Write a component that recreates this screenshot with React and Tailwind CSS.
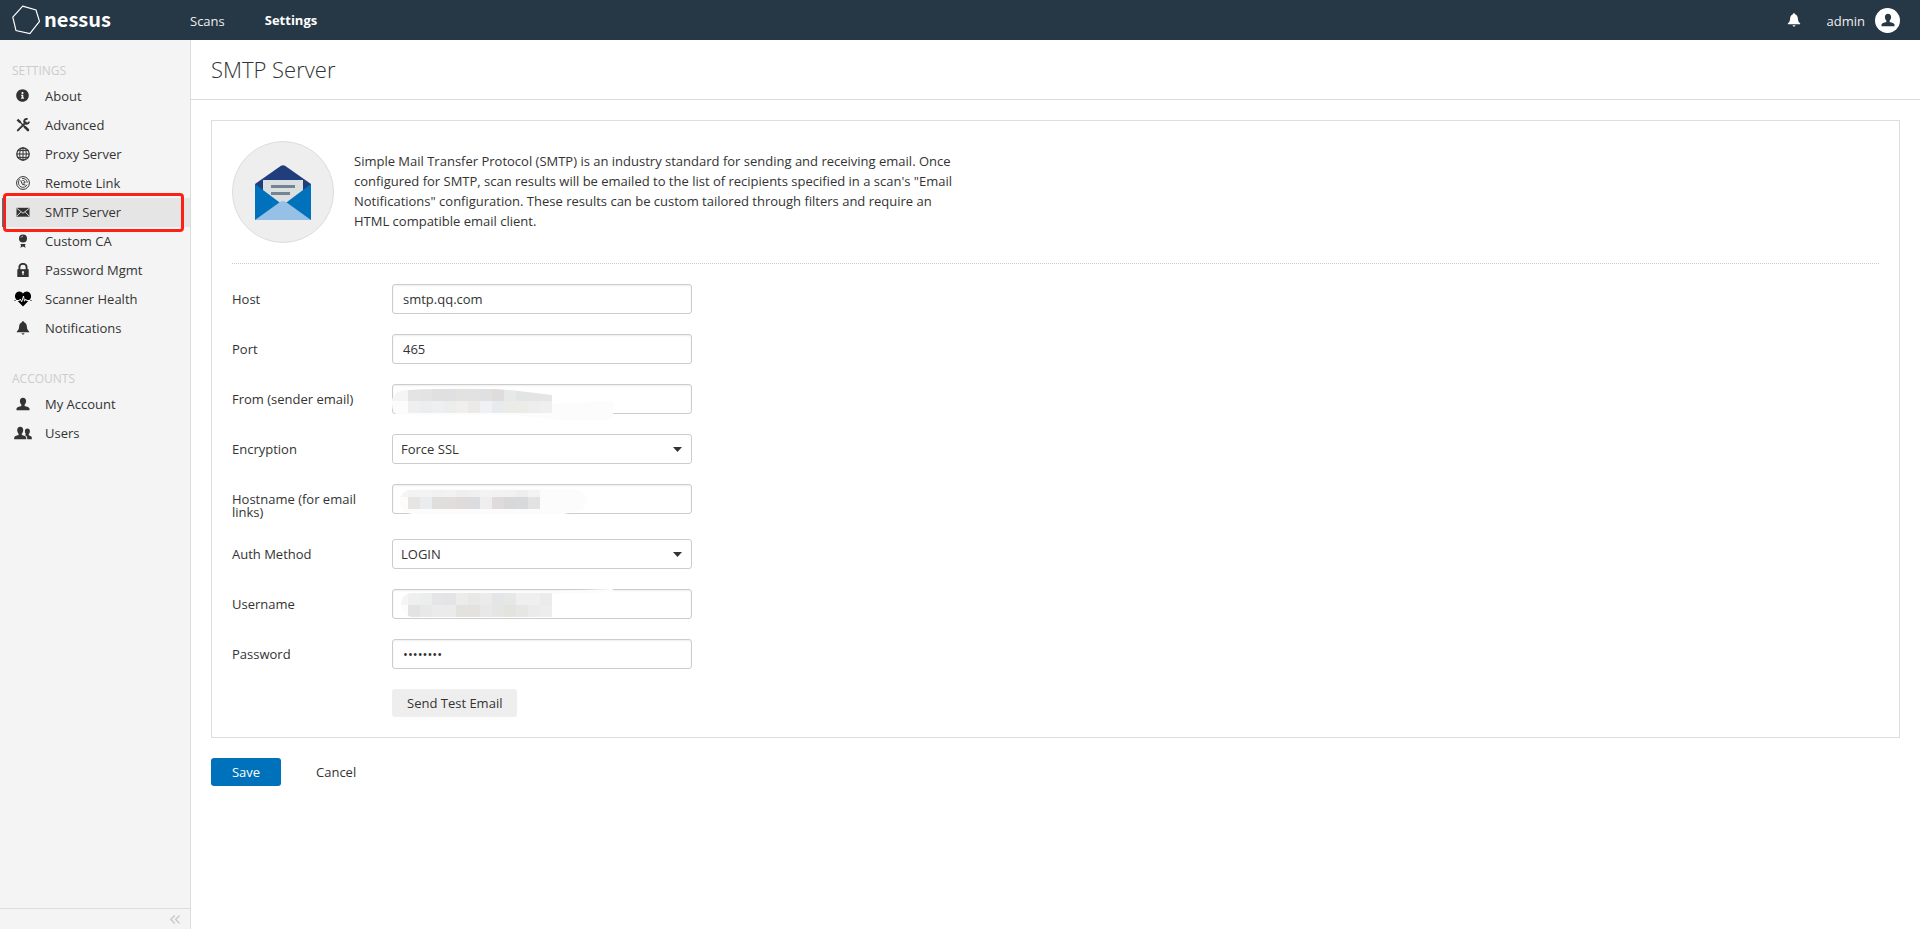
import { useState } from 'react';
import { FaInfoCircle } from 'react-icons/fa';

function ToolsIcon() {
  return (
    <svg viewBox="0 0 14 14" width="14" height="14" fill="none" stroke="currentColor">
      <path d="M1.4 1.6l3 2.8" strokeWidth="2.4" />
      <path d="M4 4l5 5" strokeWidth="1.2" />
      <path d="M8.8 8.8l3.2 3.2" strokeWidth="2.6" strokeLinecap="round" />
      <path d="M1.8 12.4l8-8" strokeWidth="2" strokeLinecap="round" />
      <path d="M11.6 1.2A2.4 2.4 0 1 0 13 3.6" strokeWidth="1.9" />
    </svg>
  );
}

function GlobeIcon() {
  return (
    <svg viewBox="0 0 14 14" width="14" height="14" fill="none" stroke="currentColor" strokeWidth="1">
      <circle cx="7" cy="7" r="6.2" strokeWidth="1.3" />
      <ellipse cx="7" cy="7" rx="3.3" ry="6.2" />
      <path d="M7 .8v12.4M.8 7h12.4M1.8 3.6h10.4M1.8 10.4h10.4" />
    </svg>
  );
}

function RemoteIcon() {
  return (
    <svg viewBox="0 0 14 14" width="14" height="14" fill="none" stroke="currentColor">
      <circle cx="7" cy="7" r="6.4" strokeWidth="1" />
      <path d="M4 2.8C1.800 5 2 9.600 5 10.900c2.400 1 5 .2 6-2.200M6 2.500c3-.4 5.300 1.500 5.200 4.300" strokeWidth=".9" />
      <path d="M4.800 4.400l1.600 4 3 .6M6.400 4.600c1.600-.4 2.800.6 2.600 2.300L7.200 7" strokeWidth="1" />
    </svg>
  );
}

function MailIcon() {
  return (
    <svg viewBox="0 0 14 14" width="14" height="14">
      <path fill="currentColor" d="M.5 2.8h13v8.9H.5z" />
      <path
        fill="none"
        stroke="#e5e5e5"
        strokeWidth=".9"
        d="M.6 3.2L7 8.2l6.4-5M.8 11.2l4.2-4.4M13.2 11.2L9 6.8"
      />
    </svg>
  );
}

function RibbonIcon() {
  return (
    <svg viewBox="0 0 14 14" width="14" height="14">
      <circle cx="7" cy="4.5" r="4" fill="currentColor" />
      <path d="M5 3.6c.4-.9 1.1-1.4 2-1.4" fill="none" stroke="#f4f4f4" strokeWidth=".7" />
      <path d="M4.4 10h5.2l-.7 1.400.8 2.400L7 12.4l-2.7 1.4.8-2.400z" fill="currentColor" />
    </svg>
  );
}

function LockIcon() {
  return (
    <svg viewBox="0 0 14 14" width="14" height="14">
      <path d="M3.4 7V3.9a3.6 3.1 0 0 1 7.2 0V7" fill="none" stroke="currentColor" strokeWidth="1.9" />
      <path d="M1.3 6.2h11.4V14H1.3z" fill="currentColor" />
      <path d="M7 8a1.2 1.2 0 0 0-.6 2.2V12h1.2v-1.8A1.2 1.2 0 0 0 7 8z" fill="#f4f4f4" />
    </svg>
  );
}

function HeartIcon() {
  return (
    <svg viewBox="0 0 18 16" width="18" height="16">
      <path
        fill="#000"
        d="M9 15.6L2.2 8.6C.4 6.500.6 3 2.600 1.400 4.700-.2 7.500.3 9 2.600 10.500.3 13.300-.2 15.400 1.400c2 1.600 2.200 5.100.4 7.200z"
      />
      <path fill="none" stroke="#f4f4f4" strokeWidth="1" d="M1.500 9.500h3.800l1-1.500 1.400 2.800L9.500 5l1 5.200 1.200-2.200.8 1.500H17" />
      <path fill="none" stroke="#555" strokeWidth=".8" d="M0 9.500h2M16 9.500h2" />
    </svg>
  );
}

function BellIcon() {
  return (
    <svg viewBox="0 0 14 14" width="14" height="14" fill="currentColor">
      <path d="M7 .3c.7 0 1 .4 1.100 1C10 1.900 10.800 3.700 10.900 5.800c.1 2.400.8 3.600 2.300 4.700v.8H.8v-.8c1.500-1.100 2.200-2.300 2.300-4.700C3.200 3.700 4 1.900 5.900 1.300c.1-.6.400-1 1.100-1z" />
      <path d="M5.500 12.300h3c-.2.800-.8 1.200-1.500 1.200s-1.300-.4-1.500-1.200z" />
    </svg>
  );
}

function UserIcon() {
  return (
    <svg viewBox="0 0 14 14" width="14" height="14" fill="currentColor">
      <path d="M7 .8c2 0 3.100 1.300 3.100 3.200 0 1.500-.6 2.800-1.500 3.700v1.200c2.500.7 4.700 1.300 4.900 2.700v1.600H.5v-1.600c.2-1.400 2.400-2 4.900-2.700V7.700C4.500 6.800 3.900 5.500 3.900 4 3.900 2.100 5 .8 7 .8z" />
    </svg>
  );
}

function UsersIcon() {
  return (
    <svg viewBox="0 0 18 14" width="18" height="14" fill="currentColor">
      <path d="M6.200.8c2 0 3 1.300 3 3.200 0 1.500-.5 2.800-1.400 3.700v1.200c2.400.7 4.200 1.300 4.400 2.700v1.600H.2v-1.600c.2-1.400 2-2 4.400-2.700V7.700C3.700 6.800 3.200 5.500 3.200 4c0-1.900 1-3.200 3-3.200z" />
      <path d="M13.400 2.600c1.600 0 2.500 1.100 2.500 2.700 0 1.200-.5 2.200-1.200 2.900v1c1.800.5 3 1.100 3.100 2.300v1.700h-4.600v-1.600c-.2-1.300-1.300-2.200-2.600-2.700l1.400-.7v-.1c-.7-.6-1.100-1.600-1.100-2.800 0-1.600.9-2.700 2.500-2.700z" />
    </svg>
  );
}

const settingsLinks = [
  { name: 'About', icon: <FaInfoCircle size={13} /> },
  { name: 'Advanced', icon: <ToolsIcon /> },
  { name: 'Proxy Server', icon: <GlobeIcon /> },
  { name: 'Remote Link', icon: <RemoteIcon /> },
  { name: 'SMTP Server', icon: <MailIcon />, active: true },
  { name: 'Custom CA', icon: <RibbonIcon /> },
  { name: 'Password Mgmt', icon: <LockIcon /> },
  { name: 'Scanner Health', icon: <HeartIcon /> },
  { name: 'Notifications', icon: <BellIcon /> },
];

const accountLinks = [
  { name: 'My Account', icon: <UserIcon /> },
  { name: 'Users', icon: <UsersIcon /> },
];

// Pixelated covers over private values: rows of 12px blocks
const masks = {
  from: {
    id: 'mask-from',
    shape: 'M0 18C1 8 8 6 18 6 50 4 90 4 118 6L160 11V20L221 17V31C222 34 216 36 210 36H170L120 31H8C2 31 0 26 0 18z',
    rows: [
      { y: 5, h: 12, colors: ['#e4e4e5', '#e3e3e4', '#e0e0e1', '#e0e0e2', '#e3e2e1', '#e3e2e2', '#dfe0e1', '#dfdddc', '#e7e8e8', '#e3e4e4', '#e5e4e4', '#e5e5e5'] },
      { y: 17, h: 12, colors: ['#f0efef', '#ecedee', '#eeeff0', '#eceded', '#f1efed', '#ebeae8', '#eff1f4', '#e8ebee', '#ecebe7', '#ebebe8', '#ededee', '#efeff0'] },
    ],
  },
  hostname: {
    id: 'mask-hostname',
    shape: 'M8 17C8 9 14 5 24 5H176C190 5 195 10 195 15L190 26 172 30H20C12 29 8 24 8 17z',
    rows: [
      { y: 6, h: 7, colors: ['#f3f3f3', '#f3f3f3', '#f1f1f1', '#f2f2f2', '#eeeeee', '#f1f0f0', '#f3f3f3', '#f2f2f2', '#f1f1f1', '#eeeeee', '#f3f3f3'] },
      { y: 13, h: 12, colors: ['#e7e5e4', '#e9edf0', '#dfdedc', '#dfdedd', '#dfdbda', '#dadce0', '#eeeeef', '#dfdbdc', '#d7d9d9', '#d7d9da', '#e3e2e2'] },
    ],
  },
  username: {
    id: 'mask-username',
    shape: 'M9 15C9 8 14 4 20 4L160 2 220 0 224 3 160 5V28H20C13 27 9 22 9 15z',
    rows: [
      { y: 4, h: 12, colors: ['#efefef', '#eceeee', '#e5e5e7', '#e4e4e6', '#ececec', '#e8e8e6', '#ebebeb', '#e4e5e7', '#e7e7e7', '#efeff0', '#efefef', '#ebebec'] },
      { y: 16, h: 12, colors: ['#e5e2e3', '#e7e9e8', '#ebebec', '#ebebec', '#e4e2df', '#e3e2df', '#e8e8ea', '#e4e6e3', '#e4e4df', '#e6e7e4', '#ebebeb', '#ededf0'] },
    ],
  },
};

function Mask({ id, shape, rows }) {
  return (
    <svg className="absolute left-0 top-0 pointer-events-none overflow-visible" width="300" height="30" aria-hidden="true">
      <clipPath id={id}>
        <path d={shape} />
      </clipPath>
      <path d={shape} fill="#fcfcfc" />
      <g clipPath={`url(#${id})`}>
        <rect x="0" y={rows[0].y} width="16" height={rows[0].h} fill="#f5f5f5" />
        {rows.map((row) =>
          row.colors.map((color, i) => (
            <rect key={`${row.y}-${i}`} x={16 + i * 12} y={row.y} width="12" height={row.h} fill={color} />
          ))
        )}
      </g>
    </svg>
  );
}

function Logo() {
  return (
    <a href="#" className="flex items-center w-[178px] gap-1 text-white">
      <svg viewBox="0 0 28 30" width="28" height="30" fill="none" stroke="currentColor" strokeWidth="1.200">
        <path d="M10.700 1.200L24 5l3.500 11.400-9.600 12.200L4 25.600.8 12.200z" />
      </svg>
      <span className="font-['Noto_Sans_CJK_SC',sans-serif] font-bold text-[20px] leading-7 pb-0.5">nessus</span>
    </a>
  );
}

function NavItem({ name, icon, active }) {
  return (
    <li className="relative">
      <a
        href="#"
        className={`flex items-center h-[29px] pb-0.5 ml-[2px] border-l-2 ${
          active ? 'bg-[#e5e5e5] border-[#0f8ca0]' : 'border-transparent'
        }`}
      >
        <span className="flex justify-center w-[37px] mr-1">{icon}</span>
        {name}
      </a>
      {active && (
        <span className="absolute left-[3px] right-[6px] -top-[5px] -bottom-[5px] border-3 border-[#ff2015] rounded-sm pointer-events-none" />
      )}
    </li>
  );
}

function Sidebar() {
  return (
    <aside className="flex flex-col justify-between w-[191px] shrink-0 bg-[#f4f4f4] border-r border-[#dcdcdc]">
      <nav className="pt-[19px]">
        <h2 className="pl-3 text-xs leading-[23px] text-[#cccccc]">SETTINGS</h2>
        <ul>
          {settingsLinks.map((link) => (
            <NavItem key={link.name} {...link} />
          ))}
        </ul>
        <h2 className="pl-3 mt-6 text-xs leading-[23px] text-[#cccccc]">ACCOUNTS</h2>
        <ul>
          {accountLinks.map((link) => (
            <NavItem key={link.name} {...link} />
          ))}
        </ul>
      </nav>
      <button type="button" aria-label="Collapse" className="flex justify-end items-center h-[21px] pr-[10px] border-t border-[#dcdcdc] text-[#c8c8c8]">
        <svg viewBox="0 0 10 9" width="10" height="9" fill="none" stroke="currentColor" strokeWidth="1.400">
          <path d="M4.800.5l-4 4 4 4M9.600.5l-4 4 4 4" />
        </svg>
      </button>
    </aside>
  );
}

function SmtpIcon() {
  return (
    <div className="flex items-center justify-center size-[102px] shrink-0 rounded-full bg-[#eeeeee] border border-[#dddddd]">
      <svg viewBox="0 0 56 55" width="56" height="55">
        <path fill="#203e7c" d="M0 19L26 .8q2-1.300 4 0L56 19v18H0z" />
        <path fill="#dae0e0" d="M8 15h40v26H8z" />
        <path fill="#748494" d="M16 20h24v3H16zM16 27h19v3H16z" />
        <path fill="#0072bb" d="M0 19l28 21 28-21v36H0z" />
        <path fill="#97c0e6" d="M0 55l25-18q3-2 6 0l25 18z" />
      </svg>
    </div>
  );
}

function Field({ id, label, children }) {
  return (
    <div className="flex">
      <label htmlFor={id} className="w-[160px] pt-[9px] pr-6 leading-[13px] shrink-0">
        {label}
      </label>
      <div className="relative w-[300px] h-[30px]">{children}</div>
    </div>
  );
}

function TextField({ id, label, type = 'text', initial = '', mask }) {
  const [value, setValue] = useState(initial);
  return (
    <Field id={id} label={label}>
      <input
        id={id}
        type={type}
        value={value}
        onChange={(e) => setValue(e.target.value)}
        className="w-full h-full px-[10px] border border-[#cccccc] rounded-[3px] bg-white shadow-[inset_0_1px_2px_#eeeeee] outline-none"
      />
      {mask && <Mask {...mask} />}
    </Field>
  );
}

function SelectField({ id, label, options }) {
  return (
    <Field id={id} label={label}>
      <select id={id} className="w-full h-full px-2 border border-[#cccccc] rounded-[3px] bg-white appearance-none outline-none">
        {options.map((option) => (
          <option key={option}>{option}</option>
        ))}
      </select>
      <svg className="absolute right-[10px] top-[13px] pointer-events-none" viewBox="0 0 9 5" width="9" height="5">
        <path d="M0 0h9L4.500 5z" fill="#333333" />
      </svg>
    </Field>
  );
}

export default function App() {
  return (
    <div className="flex flex-col min-h-screen bg-white font-['Open_Sans',sans-serif] text-[13px] leading-5 text-[#3c3c3c]">
      <header className="flex items-center h-10 pl-3 pr-5 bg-[#263746] text-[#eeeeee]">
        <Logo />
        <nav className="flex flex-1 items-center gap-10">
          <a href="#" className="pt-0.5">Scans</a>
          <a href="#" className="font-bold text-white">Settings</a>
        </nav>
        <button type="button" aria-label="Notifications" className="mr-[26px] text-white">
          <BellIcon />
        </button>
        <a href="#" className="flex items-center gap-[10px]">
          <span className="pt-0.5">admin</span>
          <span className="flex items-center justify-center size-[25px] rounded-full bg-white text-[#263746]">
            <UserIcon />
          </span>
        </a>
      </header>

      <div className="flex flex-1 text-[#333333]">
        <Sidebar />

        <main className="flex-1">
          <div className="flex items-center h-[60px] px-5 pb-0.5 border-b border-[#dcdcdc]">
            <h1 className="text-[22px] font-light">SMTP Server</h1>
          </div>

          <form className="p-5" onSubmit={(e) => e.preventDefault()}>
            <section className="p-5 border border-[#dddddd]">
              <div className="flex items-center gap-5 pb-5 border-b border-dotted border-[#cccccc]">
                <SmtpIcon />
                <p className="max-w-[600px] pb-0.5">
                  Simple Mail Transfer Protocol (SMTP) is an industry standard for sending and receiving email. Once
                  configured for SMTP, scan results will be emailed to the list of recipients specified in a scan's
                  "Email Notifications" configuration. These results can be custom tailored through filters and
                  require an HTML compatible email client.
                </p>
              </div>

              <div className="flex flex-col gap-5 pt-5">
                <TextField id="host" label="Host" initial="smtp.qq.com" />
                <TextField id="port" label="Port" initial="465" />
                <TextField id="from" label="From (sender email)" mask={masks.from} />
                <SelectField id="encryption" label="Encryption" options={['Force SSL', 'Force TLS', 'No Encryption']} />
                <TextField id="hostname" label="Hostname (for email links)" mask={masks.hostname} />
                <SelectField id="auth" label="Auth Method" options={['LOGIN', 'PLAIN', 'NTLM', 'NONE']} />
                <TextField id="username" label="Username" mask={masks.username} />
                <TextField id="password" label="Password" type="password" initial="password" />
                <div className="pl-[160px]">
                  <button type="button" className="block h-7 px-[15px] rounded-[3px] bg-[#eeeeee]">
                    Send Test Email
                  </button>
                </div>
              </div>
            </section>

            <div className="flex items-center gap-[35px] mt-5">
              <button type="submit" className="h-7 w-[70px] rounded-[3px] bg-[#0072bb] text-white font-medium">
                Save
              </button>
              <button type="button">Cancel</button>
            </div>
          </form>
        </main>
      </div>
    </div>
  );
}
